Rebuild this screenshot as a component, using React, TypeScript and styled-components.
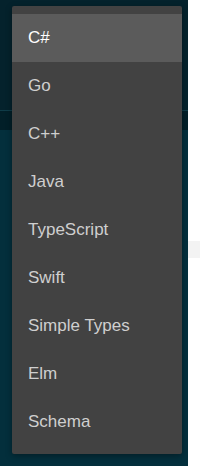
import React from 'react';
import styled, { createGlobalStyle } from 'styled-components';

const GlobalStyle = createGlobalStyle`
	html, body {
		margin: 0;
		padding: 0;
		background: #ffffff;
		font-family: 'Liberation Sans', Arial, sans-serif;
	}
`;

const Page = styled.div`
	position: relative;
	width: 200px;
	height: 466px;
	display: grid;
	grid-template-columns: 188px 12px;
	overflow: hidden;
`;

const Sidebar = styled.div`
	display: flex;
	flex-direction: column;
	background: #032f3c;
`;

const SidebarHeader = styled.div`
	height: 110px;
	background: #04222c;
	border-bottom: 1px solid #0f3c48;
`;

const SidebarBand = styled.div`
	height: 19px;
	background: #021f28;
`;

const RightPane = styled.div`
	background: #ffffff;
	display: flex;
	flex-direction: column;
	padding-top: 241px;
`;

const GreyChip = styled.div`
	height: 17px;
	background: #f3f3f3;
`;

const Menu = styled.ul`
	position: absolute;
	top: 6px;
	left: 12px;
	width: 170px;
	margin: 0;
	padding: 8px 0;
	list-style: none;
	background: #424242;
	border-radius: 2px;
	box-shadow: 0 2px 6px rgba(0, 0, 0, 0.35);
`;

const Item = styled.li<{ $active?: boolean }>`
	height: 48px;
	display: flex;
	align-items: center;
	padding: 0 16px;
	font-size: 17px;
	color: ${p => (p.$active ? '#ffffff' : '#cfcfcf')};
	background: ${p => (p.$active ? '#5b5b5b' : 'transparent')};
`;

const languages = ['C#', 'Go', 'C++', 'Java', 'TypeScript', 'Swift', 'Simple Types', 'Elm', 'Schema'];

const App: React.FC = () => {
	return (
		<>
			<GlobalStyle />
			<Page>
				<Sidebar>
					<SidebarHeader />
					<SidebarBand />
				</Sidebar>
				<RightPane>
					<GreyChip />
				</RightPane>
				<Menu>
					{languages.map((l, i) => (
						<Item key={l} $active={i === 0}>{l}</Item>
					))}
				</Menu>
			</Page>
		</>
	);
};

export default App;
